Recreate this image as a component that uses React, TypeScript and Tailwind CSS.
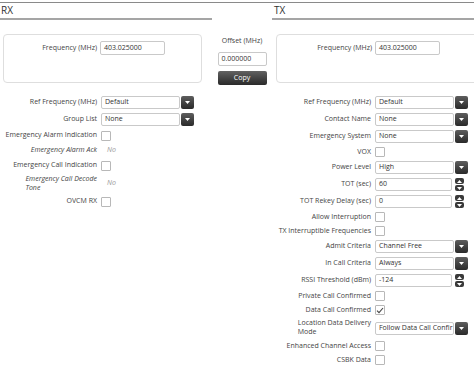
import React from 'react';

type Field = {
  label: React.ReactNode;
  kind: 'select' | 'check' | 'note' | 'spin';
  value?: string;
  checked?: boolean;
  italic?: boolean;
  h: string;
};

const rx: Field[] = [
  { label: 'Ref Frequency (MHz)', kind: 'select', value: 'Default', h: 'h-[17px]' },
  { label: 'Group List', kind: 'select', value: 'None', h: 'h-[17px]' },
  { label: 'Emergency Alarm Indication', kind: 'check', h: 'h-[15px]' },
  { label: 'Emergency Alarm Ack', kind: 'note', value: 'No', italic: true, h: 'h-[15px]' },
  { label: 'Emergency Call Indication', kind: 'check', h: 'h-[15px]' },
  {
    label: (
      <span className="inline-block text-left leading-[9px]">
        Emergency Call Decode
        <br />
        Tone
      </span>
    ),
    kind: 'note',
    value: 'No',
    italic: true,
    h: 'h-[21px]',
  },
  { label: 'OVCM RX', kind: 'check', h: 'h-[15px]' },
];

const tx: Field[] = [
  { label: 'Ref Frequency (MHz)', kind: 'select', value: 'Default', h: 'h-[17px]' },
  { label: 'Contact Name', kind: 'select', value: 'None', h: 'h-[17px]' },
  { label: 'Emergency System', kind: 'select', value: 'None', h: 'h-[17px]' },
  { label: 'VOX', kind: 'check', h: 'h-[14px]' },
  { label: 'Power Level', kind: 'select', value: 'High', h: 'h-[17px]' },
  { label: 'TOT (sec)', kind: 'spin', value: '60', h: 'h-[17px]' },
  { label: 'TOT Rekey Delay (sec)', kind: 'spin', value: '0', h: 'h-[17px]' },
  { label: 'Allow Interruption', kind: 'check', h: 'h-[14px]' },
  { label: 'TX Interruptible Frequencies', kind: 'check', h: 'h-[14px]' },
  { label: 'Admit Criteria', kind: 'select', value: 'Channel Free', h: 'h-[17px]' },
  { label: 'In Call Criteria', kind: 'select', value: 'Always', h: 'h-[17px]' },
  { label: 'RSSI Threshold (dBm)', kind: 'spin', value: '-124', h: 'h-[17px]' },
  { label: 'Private Call Confirmed', kind: 'check', h: 'h-[14px]' },
  { label: 'Data Call Confirmed', kind: 'check', checked: true, h: 'h-[14px]' },
  {
    label: (
      <span className="inline-block text-left leading-[9px]">
        Location Data Delivery
        <br />
        Mode
      </span>
    ),
    kind: 'select',
    value: 'Follow Data Call Confir',
    h: 'h-[22px]',
  },
  { label: 'Enhanced Channel Access', kind: 'check', h: 'h-[14px]' },
  { label: 'CSBK Data', kind: 'check', h: 'h-[14px]' },
];

function DownArrow() {
  return (
    <svg width="5" height="3" viewBox="0 0 5 3">
      <path d="M0 0h5L2.5 3z" fill="#fff" />
    </svg>
  );
}

function Select({ value }: { value: string }) {
  return (
    <div className="flex h-[13px] w-[93px]">
      <div className="flex min-w-0 flex-1 items-center overflow-hidden whitespace-nowrap rounded-[2px] border border-[#c9c9c9] bg-white pl-[3px] text-[#333]">
        {value}
      </div>
      <div className="ml-[1px] flex w-[13px] items-center justify-center rounded-[2px] bg-linear-to-b from-[#5e5e5e] to-[#2a2a2a]">
        <DownArrow />
      </div>
    </div>
  );
}

function Check({ checked }: { checked?: boolean }) {
  return (
    <div className="flex h-[10px] w-[10px] items-center justify-center rounded-[1px] border border-[#b8b8b8] bg-white">
      {checked && (
        <svg width="8" height="7" viewBox="0 0 8 7">
          <path d="M1 3.6 3 5.6 7 1" fill="none" stroke="#444" strokeWidth="1.1" />
        </svg>
      )}
    </div>
  );
}

function Spin({ value }: { value: string }) {
  return (
    <div className="flex h-[13px] items-center">
      <div className="flex h-[13px] w-[77px] items-center rounded-[2px] border border-[#c9c9c9] bg-white pl-[3px] text-[#333]">
        {value}
      </div>
      <div className="ml-[3px] flex w-[9px] flex-col gap-[1px]">
        <div className="flex h-[6px] items-center justify-center rounded-[2px] bg-[#3a3a3a]">
          <svg width="5" height="3" viewBox="0 0 5 3">
            <path d="M0 3h5L2.5 0z" fill="#fff" />
          </svg>
        </div>
        <div className="flex h-[6px] items-center justify-center rounded-[2px] bg-[#3a3a3a]">
          <DownArrow />
        </div>
      </div>
    </div>
  );
}

function Rows({ fields, labelW }: { fields: Field[]; labelW: string }) {
  return (
    <div className="flex flex-col">
      {fields.map((f, i) => (
        <div key={i} className={`flex items-center ${f.h}`}>
          <div className={`${labelW} shrink-0 whitespace-nowrap text-right ${f.italic ? 'italic' : ''}`}>{f.label}</div>
          <div className="ml-[4px]">
            {f.kind === 'select' && <Select value={f.value!} />}
            {f.kind === 'check' && <Check checked={f.checked} />}
            {f.kind === 'spin' && <Spin value={f.value!} />}
            {f.kind === 'note' && <span className="ml-[6px] italic text-[#9a9a9a]">{f.value}</span>}
          </div>
        </div>
      ))}
    </div>
  );
}

function FreqBox({ labelW, width }: { labelW: string; width: string }) {
  return (
    <div className={`mt-[14px] h-[49px] ${width} rounded-[4px] border border-[#dedede] pt-[6px]`}>
      <div className="flex items-center">
        <div className={`${labelW} shrink-0 whitespace-nowrap text-right`}>Frequency (MHz)</div>
        <div className="ml-[3px] flex h-[14px] w-[65px] items-center rounded-[2px] border border-[#c9c9c9] bg-white pl-[3px] text-[#333]">
          403.025000
        </div>
      </div>
    </div>
  );
}

export default function App() {
  return (
    <div className="h-[369px] w-[474px] overflow-hidden bg-white font-['Open_Sans','Noto_Sans',sans-serif] text-[7px] text-[#444]">
      <div className="mt-[2px] h-[1px] bg-[#8a8a8a]" />
      <div className="flex">
        <div className="flex w-[212px] shrink-0 flex-col">
          <div className="flex h-[15px] items-center pl-[1px] text-[10px] text-[#333]">RX</div>
          <div className="h-[2px] bg-[#a5a5a5]" />
          <div className="ml-[3px]">
            <FreqBox labelW="w-[93px]" width="w-[199px]" />
          </div>
          <div className="mt-[11px]">
            <Rows fields={rx} labelW="w-[97px]" />
          </div>
        </div>
        <div className="flex w-[60px] shrink-0 flex-col items-center pt-[32px]">
          <div className="h-[12px] leading-[12px]">Offset (MHz)</div>
          <div className="mt-[5px] flex h-[14px] w-[49px] items-center rounded-[2px] border border-[#c9c9c9] bg-white pl-[3px] text-[#333]">
            0.000000
          </div>
          <div className="mt-[5px] flex h-[14px] w-[49px] items-center justify-center rounded-[2px] bg-linear-to-b from-[#626262] to-[#2a2a2a] text-white">
            Copy
          </div>
        </div>
        <div className="flex w-[202px] shrink-0 flex-col">
          <div className="flex h-[15px] items-center pl-[2px] text-[10px] text-[#333]">TX</div>
          <div className="h-[2px] bg-[#a5a5a5]" />
          <div className="ml-[4px]">
            <FreqBox labelW="w-[95px]" width="w-[220px]" />
          </div>
          <div className="mt-[11px]">
            <Rows fields={tx} labelW="w-[99px]" />
          </div>
        </div>
      </div>
    </div>
  );
}
